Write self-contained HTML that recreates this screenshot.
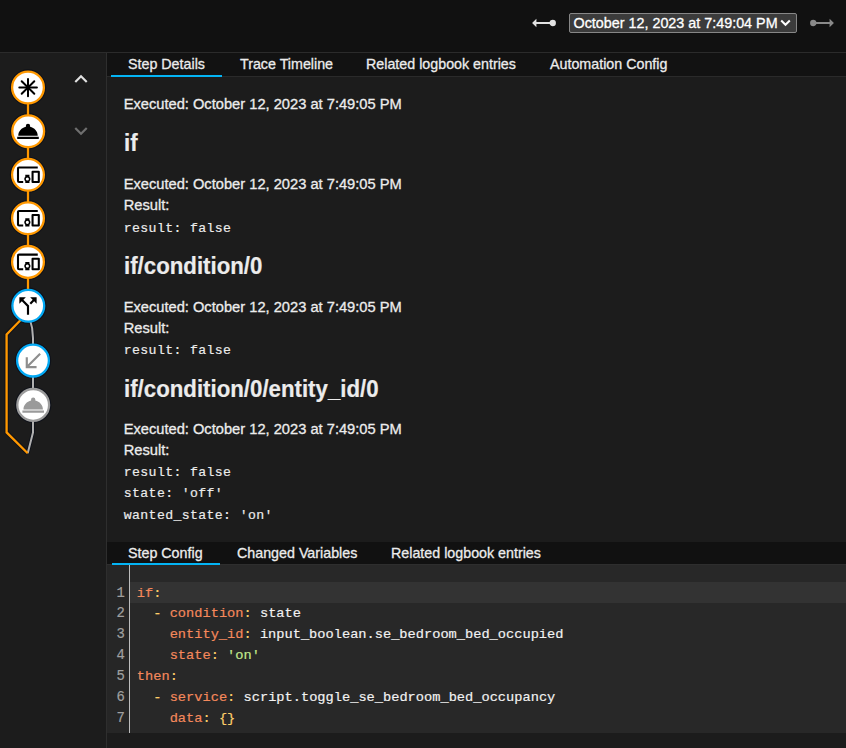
<!DOCTYPE html>
<html><head><meta charset="utf-8"><style>
html,body{margin:0;padding:0;}
body{width:846px;height:748px;overflow:hidden;position:relative;background:#1c1c1c;font-family:"Liberation Sans",sans-serif;}
.t{position:absolute;white-space:pre;font-family:"Liberation Sans",sans-serif;}
.m{position:absolute;white-space:pre;font-family:"Liberation Mono",monospace;}
</style></head><body>
<div style="position:absolute;left:0px;top:0px;width:846px;height:52px;background:#111111;"></div>
<div style="position:absolute;left:0px;top:52px;width:846px;height:1px;background:#2b2b2b;"></div>
<svg width="26" height="26" viewBox="0 0 24 24" style="position:absolute;left:531px;top:9.7px"><path d="M1,12L5,16V13H17.17C17.58,14.17 18.69,15 20,15A3,3 0 0,0 23,12A3,3 0 0,0 20,9C18.69,9 17.58,9.83 17.17,11H5V8L1,12Z" fill="#e1e1e1"/></svg>
<svg width="26" height="26" viewBox="0 0 24 24" style="position:absolute;left:809px;top:9.7px"><path d="M23,12L19,16V13H6.83C6.42,14.17 5.31,15 4,15A3,3 0 0,1 1,12A3,3 0 0,1 4,9C5.31,9 6.42,9.83 6.83,11H19V8L23,12Z" fill="#8a8a8a"/></svg>
<div style="position:absolute;left:568.8px;top:13px;width:228px;height:20px;background:#3b3b3b;box-sizing:border-box;border:1px solid #878787;border-radius:2px;"></div>
<div class="t" style="left:573.48px;top:15.75px;font-size:14.35px;line-height:14.35px;font-weight:normal;color:#ffffff;-webkit-text-stroke:0.3px #ffffff;">October 12, 2023 at 7:49:04 PM</div>
<svg width="12" height="8" viewBox="0 0 12 8" style="position:absolute;left:779.9px;top:19px"><path d="M1.2,1.5 L5.5,5.8 L9.8,1.5" fill="none" stroke="#ffffff" stroke-width="2"/></svg>
<div style="position:absolute;left:106px;top:53px;width:1px;height:695px;background:#2e2e2e;"></div>
<svg width="106" height="695" viewBox="0 53 106 695" style="position:absolute;left:0;top:53px"><path d="M29.5,318 Q33,328 33,338 V432.4 L27.7,453.2" fill="none" stroke="#0f121a" stroke-width="3.8" stroke-linejoin="round"/><path d="M28,87.5 V305.7 M24,316.5 L6.6,334.5 V432.4 L27.7,453.2" fill="none" stroke="#0f121a" stroke-width="4.4"/><circle cx="28" cy="87.5" r="18.150000000000002" fill="#0f121a"/><circle cx="28.2" cy="131.2" r="18.150000000000002" fill="#0f121a"/><circle cx="28" cy="174.8" r="18.150000000000002" fill="#0f121a"/><circle cx="28" cy="218.2" r="18.150000000000002" fill="#0f121a"/><circle cx="28" cy="261.9" r="18.150000000000002" fill="#0f121a"/><circle cx="28.3" cy="305.7" r="18.150000000000002" fill="#0f121a"/><circle cx="33" cy="360.6" r="18.150000000000002" fill="#0f121a"/><circle cx="33.2" cy="404.9" r="18.150000000000002" fill="#0f121a"/><path d="M29.5,318 Q33,328 33,338 V432.4 L27.7,453.2" fill="none" stroke="#b0b0b0" stroke-width="2" stroke-linejoin="round"/><path d="M28,87.5 V305.7 M24,316.5 L6.6,334.5 V432.4 L27.7,453.2" fill="none" stroke="#ff9800" stroke-width="2.3"/><circle cx="28" cy="87.5" r="15.9" fill="#ffffff" stroke="#ff9800" stroke-width="2.3"/><circle cx="28.2" cy="131.2" r="15.9" fill="#ffffff" stroke="#ff9800" stroke-width="2.3"/><circle cx="28" cy="174.8" r="15.9" fill="#ffffff" stroke="#ff9800" stroke-width="2.3"/><circle cx="28" cy="218.2" r="15.9" fill="#ffffff" stroke="#ff9800" stroke-width="2.3"/><circle cx="28" cy="261.9" r="15.9" fill="#ffffff" stroke="#ff9800" stroke-width="2.3"/><circle cx="28.3" cy="305.7" r="15.9" fill="#ffffff" stroke="#03a9f4" stroke-width="2.3"/><circle cx="33" cy="360.6" r="15.9" fill="#ffffff" stroke="#03a9f4" stroke-width="2.3"/><circle cx="33.2" cy="404.9" r="15.9" fill="#ffffff" stroke="#9c9c9c" stroke-width="2.3"/><line x1="28" y1="78.9" x2="28" y2="96.2" stroke="#000" stroke-width="2" stroke-linecap="round"/><line x1="19.3" y1="87.5" x2="36.9" y2="87.5" stroke="#000" stroke-width="2" stroke-linecap="round"/><line x1="21.7" y1="81.3" x2="34.3" y2="93.8" stroke="#000" stroke-width="2" stroke-linecap="round"/><line x1="34.3" y1="81.3" x2="21.7" y2="93.8" stroke="#000" stroke-width="2" stroke-linecap="round"/><path transform="translate(15.04,118.44) scale(1.08)" d="M12,5A2,2 0 0,1 14,7C14,7.24 13.96,7.47 13.88,7.69C17.95,8.5 21,11.91 21,16H3C3,11.91 6.05,8.5 10.12,7.69C10.04,7.47 10,7.24 10,7A2,2 0 0,1 12,5M22,19H2V17H22V19Z" fill="#000"/><path transform="translate(15.92,162.32) scale(1.04)" d="M3,6H21V4H3C1.89,4 1,4.89 1,6V18A2,2 0 0,0 3,20H7V18H3V6M13,12H9V13.78C8.39,14.33 8,15.11 8,16C8,16.89 8.39,17.67 9,18.22V20H13V18.22C13.61,17.67 14,16.88 14,16C14,15.12 13.61,14.33 13,13.78V12M11,17.5A1.5,1.5 0 0,1 9.5,16A1.5,1.5 0 0,1 11,14.5A1.5,1.5 0 0,1 12.5,16A1.5,1.5 0 0,1 11,17.5M22,8H16A1,1 0 0,0 15,9V19A1,1 0 0,0 16,20H22A1,1 0 0,0 23,19V9A1,1 0 0,0 22,8M21,18H17V10H21V18Z" fill="#000"/><path transform="translate(15.92,205.72) scale(1.04)" d="M3,6H21V4H3C1.89,4 1,4.89 1,6V18A2,2 0 0,0 3,20H7V18H3V6M13,12H9V13.78C8.39,14.33 8,15.11 8,16C8,16.89 8.39,17.67 9,18.22V20H13V18.22C13.61,17.67 14,16.88 14,16C14,15.12 13.61,14.33 13,13.78V12M11,17.5A1.5,1.5 0 0,1 9.5,16A1.5,1.5 0 0,1 11,14.5A1.5,1.5 0 0,1 12.5,16A1.5,1.5 0 0,1 11,17.5M22,8H16A1,1 0 0,0 15,9V19A1,1 0 0,0 16,20H22A1,1 0 0,0 23,19V9A1,1 0 0,0 22,8M21,18H17V10H21V18Z" fill="#000"/><path transform="translate(15.92,249.42) scale(1.04)" d="M3,6H21V4H3C1.89,4 1,4.89 1,6V18A2,2 0 0,0 3,20H7V18H3V6M13,12H9V13.78C8.39,14.33 8,15.11 8,16C8,16.89 8.39,17.67 9,18.22V20H13V18.22C13.61,17.67 14,16.88 14,16C14,15.12 13.61,14.33 13,13.78V12M11,17.5A1.5,1.5 0 0,1 9.5,16A1.5,1.5 0 0,1 11,14.5A1.5,1.5 0 0,1 12.5,16A1.5,1.5 0 0,1 11,17.5M22,8H16A1,1 0 0,0 15,9V19A1,1 0 0,0 16,20H22A1,1 0 0,0 23,19V9A1,1 0 0,0 22,8M21,18H17V10H21V18Z" fill="#000"/><path transform="translate(15.04,293.04) scale(1.08)" d="M14,4L16.29,6.29L13.41,9.17L14.83,10.59L17.71,7.71L20,10V4M10,4H4V10L6.29,7.71L11,12.41V20H13V11.59L7.71,6.29" fill="#000"/><path transform="translate(20.27,347.57) scale(1.086)" d="M19,6.41L17.59,5L7,15.59V9H5V19H15V17H8.41L19,6.41Z" fill="#8e8e8e"/><path transform="translate(20.24,392.14) scale(1.08)" d="M12,5A2,2 0 0,1 14,7C14,7.24 13.96,7.47 13.88,7.69C17.95,8.5 21,11.91 21,16H3C3,11.91 6.05,8.5 10.12,7.69C10.04,7.47 10,7.24 10,7A2,2 0 0,1 12,5M22,19H2V17H22V19Z" fill="#9a9a9a"/></svg>
<svg width="26" height="26" viewBox="0 0 24 24" style="position:absolute;left:67.9px;top:66.1px"><path d="M7.41,15.41L12,10.83L16.59,15.41L18,14L12,8L6,14L7.41,15.41Z" fill="#e1e1e1"/></svg>
<svg width="26" height="26" viewBox="0 0 24 24" style="position:absolute;left:68px;top:117.8px"><path d="M7.41,8.58L12,13.17L16.59,8.58L18,10L12,16L6,10L7.41,8.58Z" fill="#6f6f6f"/></svg>
<div style="position:absolute;left:107px;top:53px;width:739px;height:23px;background:#121212;"></div>
<div style="position:absolute;left:107px;top:76px;width:739px;height:1px;background:#2a2a2a;"></div>
<div style="position:absolute;left:111px;top:75px;width:111px;height:2px;background:#04b4f4;"></div>
<div class="t" style="left:127.89px;top:56.30px;font-size:15.0px;line-height:15.0px;font-weight:normal;color:#ececec;-webkit-text-stroke:0.3px #ececec;transform:scaleX(0.9513);transform-origin:0 0;">Step Details</div>
<div class="t" style="left:239.71px;top:56.30px;font-size:15.0px;line-height:15.0px;font-weight:normal;color:#ececec;-webkit-text-stroke:0.3px #ececec;transform:scaleX(0.9513);transform-origin:0 0;">Trace Timeline</div>
<div class="t" style="left:365.56px;top:56.30px;font-size:15.0px;line-height:15.0px;font-weight:normal;color:#ececec;-webkit-text-stroke:0.3px #ececec;transform:scaleX(0.9513);transform-origin:0 0;">Related logbook entries</div>
<div class="t" style="left:550.40px;top:56.30px;font-size:15.0px;line-height:15.0px;font-weight:normal;color:#ececec;-webkit-text-stroke:0.3px #ececec;transform:scaleX(0.9513);transform-origin:0 0;">Automation Config</div>
<div class="t" style="left:123.63px;top:96.57px;font-size:14.68px;line-height:14.68px;font-weight:normal;color:#ececec;-webkit-text-stroke:0.3px #ececec;">Executed: October 12, 2023 at 7:49:05 PM</div>
<div class="t" style="left:123.94px;top:131.62px;font-size:23.6px;line-height:23.6px;font-weight:bold;color:#ececec;-webkit-text-stroke:0.2px #ececec;transform:scaleX(0.9428);transform-origin:0 0;">if</div>
<div class="t" style="left:123.63px;top:176.57px;font-size:14.68px;line-height:14.68px;font-weight:normal;color:#ececec;-webkit-text-stroke:0.3px #ececec;">Executed: October 12, 2023 at 7:49:05 PM</div>
<div class="t" style="left:123.63px;top:197.57px;font-size:14.68px;line-height:14.68px;font-weight:normal;color:#ececec;-webkit-text-stroke:0.3px #ececec;">Result:</div>
<div class="m" style="left:123.80px;top:222.48px;font-size:13.2px;line-height:13.2px;color:#ececec;-webkit-text-stroke:0.18px;letter-spacing:0.36px;">result: false</div>
<div class="t" style="left:123.94px;top:254.62px;font-size:23.6px;line-height:23.6px;font-weight:bold;color:#ececec;-webkit-text-stroke:0.2px #ececec;transform:scaleX(0.9428);transform-origin:0 0;">if/condition/0</div>
<div class="t" style="left:123.63px;top:299.57px;font-size:14.68px;line-height:14.68px;font-weight:normal;color:#ececec;-webkit-text-stroke:0.3px #ececec;">Executed: October 12, 2023 at 7:49:05 PM</div>
<div class="t" style="left:123.63px;top:320.57px;font-size:14.68px;line-height:14.68px;font-weight:normal;color:#ececec;-webkit-text-stroke:0.3px #ececec;">Result:</div>
<div class="m" style="left:123.80px;top:344.48px;font-size:13.2px;line-height:13.2px;color:#ececec;-webkit-text-stroke:0.18px;letter-spacing:0.36px;">result: false</div>
<div class="t" style="left:123.94px;top:377.62px;font-size:23.6px;line-height:23.6px;font-weight:bold;color:#ececec;-webkit-text-stroke:0.2px #ececec;transform:scaleX(0.9428);transform-origin:0 0;">if/condition/0/entity_id/0</div>
<div class="t" style="left:123.63px;top:421.57px;font-size:14.68px;line-height:14.68px;font-weight:normal;color:#ececec;-webkit-text-stroke:0.3px #ececec;">Executed: October 12, 2023 at 7:49:05 PM</div>
<div class="t" style="left:123.63px;top:442.57px;font-size:14.68px;line-height:14.68px;font-weight:normal;color:#ececec;-webkit-text-stroke:0.3px #ececec;">Result:</div>
<div class="m" style="left:123.80px;top:466.48px;font-size:13.2px;line-height:13.2px;color:#ececec;-webkit-text-stroke:0.18px;letter-spacing:0.36px;">result: false</div>
<div class="m" style="left:123.80px;top:487.48px;font-size:13.2px;line-height:13.2px;color:#ececec;-webkit-text-stroke:0.18px;letter-spacing:0.36px;">state: &#39;off&#39;</div>
<div class="m" style="left:123.80px;top:509.48px;font-size:13.2px;line-height:13.2px;color:#ececec;-webkit-text-stroke:0.18px;letter-spacing:0.36px;">wanted_state: &#39;on&#39;</div>
<div style="position:absolute;left:107px;top:542px;width:739px;height:22px;background:#111111;"></div>
<div style="position:absolute;left:107px;top:564px;width:739px;height:1px;background:#2e2e2e;"></div>
<div style="position:absolute;left:111.5px;top:563px;width:108px;height:2px;background:#04b4f4;"></div>
<div class="t" style="left:128.39px;top:545.30px;font-size:15.0px;line-height:15.0px;font-weight:normal;color:#ececec;-webkit-text-stroke:0.3px #ececec;transform:scaleX(0.9513);transform-origin:0 0;">Step Config</div>
<div class="t" style="left:236.59px;top:545.30px;font-size:15.0px;line-height:15.0px;font-weight:normal;color:#ececec;-webkit-text-stroke:0.3px #ececec;transform:scaleX(0.9513);transform-origin:0 0;">Changed Variables</div>
<div class="t" style="left:390.86px;top:545.30px;font-size:15.0px;line-height:15.0px;font-weight:normal;color:#ececec;-webkit-text-stroke:0.3px #ececec;transform:scaleX(0.9513);transform-origin:0 0;">Related logbook entries</div>
<div style="position:absolute;left:107px;top:565px;width:739px;height:168px;background:#282828;"></div>
<div style="position:absolute;left:107px;top:565px;width:22px;height:168px;background:#262626;"></div>
<div style="position:absolute;left:130px;top:582px;width:716px;height:20.8px;background:#333333;"></div>
<div style="position:absolute;left:129px;top:565px;width:1px;height:168px;background:#bdbdbd;"></div>
<div class="m" style="left:116.60px;top:586.95px;font-size:13.9px;line-height:13.9px;color:#a0a0a0;-webkit-text-stroke:0.18px;">1</div>
<div class="m" style="left:136.80px;top:587.11px;font-size:13.68px;line-height:13.68px;color:#ececec;-webkit-text-stroke:0.18px;"><span style="color:#f5895c">if</span><span style="color:#ffd06a">:</span></div>
<div class="m" style="left:116.60px;top:606.95px;font-size:13.9px;line-height:13.9px;color:#a0a0a0;-webkit-text-stroke:0.18px;">2</div>
<div class="m" style="left:136.80px;top:607.11px;font-size:13.68px;line-height:13.68px;color:#ececec;-webkit-text-stroke:0.18px;"><span style="color:#f2f2f2">  </span><span style="color:#ffd06a">-</span><span style="color:#f2f2f2"> </span><span style="color:#f5895c">condition</span><span style="color:#ffd06a">:</span><span style="color:#f2f2f2"> state</span></div>
<div class="m" style="left:116.60px;top:627.95px;font-size:13.9px;line-height:13.9px;color:#a0a0a0;-webkit-text-stroke:0.18px;">3</div>
<div class="m" style="left:136.80px;top:628.11px;font-size:13.68px;line-height:13.68px;color:#ececec;-webkit-text-stroke:0.18px;"><span style="color:#f2f2f2">    </span><span style="color:#f5895c">entity_id</span><span style="color:#ffd06a">:</span><span style="color:#f2f2f2"> input_boolean.se_bedroom_bed_occupied</span></div>
<div class="m" style="left:116.60px;top:648.95px;font-size:13.9px;line-height:13.9px;color:#a0a0a0;-webkit-text-stroke:0.18px;">4</div>
<div class="m" style="left:136.80px;top:649.11px;font-size:13.68px;line-height:13.68px;color:#ececec;-webkit-text-stroke:0.18px;"><span style="color:#f2f2f2">    </span><span style="color:#f5895c">state</span><span style="color:#ffd06a">:</span><span style="color:#f2f2f2"> </span><span style="color:#c3e88d">&#39;on&#39;</span></div>
<div class="m" style="left:116.60px;top:669.95px;font-size:13.9px;line-height:13.9px;color:#a0a0a0;-webkit-text-stroke:0.18px;">5</div>
<div class="m" style="left:136.80px;top:670.11px;font-size:13.68px;line-height:13.68px;color:#ececec;-webkit-text-stroke:0.18px;"><span style="color:#f5895c">then</span><span style="color:#ffd06a">:</span></div>
<div class="m" style="left:116.60px;top:690.95px;font-size:13.9px;line-height:13.9px;color:#a0a0a0;-webkit-text-stroke:0.18px;">6</div>
<div class="m" style="left:136.80px;top:691.11px;font-size:13.68px;line-height:13.68px;color:#ececec;-webkit-text-stroke:0.18px;"><span style="color:#f2f2f2">  </span><span style="color:#ffd06a">-</span><span style="color:#f2f2f2"> </span><span style="color:#f5895c">service</span><span style="color:#ffd06a">:</span><span style="color:#f2f2f2"> script.toggle_se_bedroom_bed_occupancy</span></div>
<div class="m" style="left:116.60px;top:711.95px;font-size:13.9px;line-height:13.9px;color:#a0a0a0;-webkit-text-stroke:0.18px;">7</div>
<div class="m" style="left:136.80px;top:712.11px;font-size:13.68px;line-height:13.68px;color:#ececec;-webkit-text-stroke:0.18px;"><span style="color:#f2f2f2">    </span><span style="color:#f5895c">data</span><span style="color:#ffd06a">:</span><span style="color:#f2f2f2"> </span><span style="color:#ffd06a">{}</span></div>

</body></html>
